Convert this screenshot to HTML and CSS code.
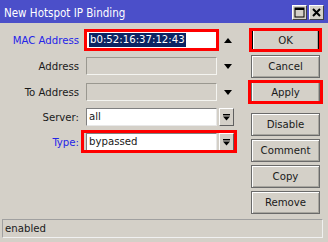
FILE: index.html
```html
<!DOCTYPE html>
<html>
<head>
<meta charset="utf-8">
<link rel="stylesheet" href="styles.css">
</head>
<body>
<div class="window">
  <div class="titlebar">
    <span class="title">New Hotspot IP Binding</span>
    <div class="tbtns">
      <span class="tbtn"><svg width="11" height="11" viewBox="0 0 11 11"><rect x="1" y="1" width="9" height="9" fill="none" stroke="#000" stroke-width="1"/><rect x="1" y="1" width="9" height="2" fill="#000"/></svg></span>
      <span class="tbtn"><svg width="11" height="11" viewBox="0 0 11 11"><path d="M2 2 L9 9 M9 2 L2 9" stroke="#000" stroke-width="2"/></svg></span>
    </div>
  </div>
  <div class="main">
    <div class="form">
      <div class="row r1">
        <label class="lbl blue">MAC Address</label>
        <div class="field white mark mark-mac"><span class="sel">b0:52:16:37:12:43</span></div>
        <div class="side"><span class="tri up"></span></div>
      </div>
      <div class="row r2">
        <label class="lbl">Address</label>
        <div class="field dis"></div>
        <div class="side"><span class="tri down"></span></div>
      </div>
      <div class="row">
        <label class="lbl">To Address</label>
        <div class="field dis"></div>
        <div class="side"><span class="tri down"></span></div>
      </div>
      <div class="row">
        <label class="lbl">Server:</label>
        <div class="combo">
          <div class="field white">all</div>
          <div class="ddbtn"><svg width="9" height="9" viewBox="0 0 9 9"><rect x="1" y="1" width="7" height="1.4" fill="#000"/><path d="M1 3.5 H8 L4.5 7.5 Z" fill="#000"/></svg></div>
        </div>
      </div>
      <div class="row">
        <label class="lbl blue">Type:</label>
        <div class="combo mark mark-type">
          <div class="field white">bypassed</div>
          <div class="ddbtn"><svg width="9" height="9" viewBox="0 0 9 9"><rect x="1" y="1" width="7" height="1.4" fill="#000"/><path d="M1 3.5 H8 L4.5 7.5 Z" fill="#000"/></svg></div>
        </div>
      </div>
    </div>
    <div class="buttons">
      <button class="btn default mark mark-btn">OK</button>
      <button class="btn">Cancel</button>
      <button class="btn mark mark-btn">Apply</button>
      <button class="btn sep">Disable</button>
      <button class="btn">Comment</button>
      <button class="btn">Copy</button>
      <button class="btn">Remove</button>
    </div>
  </div>
  <div class="status">enabled</div>
</div>
</body>
</html>
```
FILE: styles.css
```css
html, body {
  margin: 0;
  padding: 0;
}
body {
  width: 328px;
  height: 242px;
  background: #d4d0c8;
  font-family: "DejaVu Sans Condensed", "DejaVu Sans", sans-serif;
  font-size: 11.3px;
  color: #1a1a1a;
  overflow: hidden;
}
.window {
  width: 328px;
  height: 242px;
  display: flex;
  flex-direction: column;
}
.titlebar {
  height: 23px;
  background: #4b4fc9;
  color: #fff;
  display: flex;
  align-items: center;
  justify-content: space-between;
  padding: 0 4px 0 4px;
  box-sizing: border-box;
}
.title {
  font-size: 11.5px;
  padding-top: 3px;
}
.tbtns {
  display: flex;
  gap: 2px;
  padding-top: 1px;
}
.tbtn {
  width: 15px;
  height: 15px;
  box-sizing: border-box;
  background: #d4d0c8;
  border: 1px solid;
  border-color: #fff #404040 #404040 #fff;
  display: flex;
  align-items: center;
  justify-content: center;
}
.main {
  display: flex;
  height: 196px;
}
.form {
  width: 251px;
  padding-top: 8px;
  display: flex;
  flex-direction: column;
  gap: 7px;
}
.row {
  display: flex;
  align-items: center;
  height: 18px;
}
.row.r1, .row.r2 {
  margin-bottom: 1px;
}
.lbl {
  width: 79px;
  text-align: right;
  margin-right: 7px;
  white-space: nowrap;
}
.blue {
  color: #2424e8;
}
.field {
  width: 131px;
  height: 18px;
  box-sizing: border-box;
  border: 1px solid;
  padding: 0 2px;
  line-height: 16px;
  white-space: nowrap;
}
.field.dis {
  background: #d4d0c8;
  border-color: #9a9890 #f4f4f0 #f4f4f0 #9a9890;
}
.field.white {
  background: #fff;
  border-color: #808080 #e8e8e8 #e8e8e8 #808080;
}
.sel {
  background: #0b2463;
  color: #fff;
  display: inline-block;
  line-height: 14px;
  padding: 0 1px;
}
.side {
  width: 16px;
  margin-left: 3px;
  display: flex;
  justify-content: center;
  align-items: center;
}
.tri {
  width: 0;
  height: 0;
  border-left: 4.5px solid transparent;
  border-right: 4.5px solid transparent;
}
.tri.up {
  border-bottom: 5px solid #000;
}
.tri.down {
  border-top: 5px solid #000;
}
.combo {
  display: flex;
  gap: 2px;
  height: 18px;
}
.ddbtn {
  width: 15px;
  height: 18px;
  box-sizing: border-box;
  background: #d4d0c8;
  border: 1px solid;
  border-color: #fff #606060 #606060 #fff;
  display: flex;
  align-items: center;
  justify-content: center;
}
.mark {
  position: relative;
}
.mark::after {
  content: "";
  position: absolute;
  border: 3px solid #ff0000;
  pointer-events: none;
}
.mark-mac::after {
  left: -3px; right: -3px; top: -3px; bottom: -3px;
}
.mark-type::after {
  left: -5px; right: -3px; top: -3px; bottom: -2px;
}
.mark-btn::after {
  left: -4px; right: -4px; top: -2px; bottom: -1px;
}
.buttons {
  display: flex;
  flex-direction: column;
  gap: 3px;
  padding-top: 6px;
}
.btn {
  width: 69px;
  height: 23px;
  margin: 0;
  padding: 0;
  font: inherit;
  color: #1a1a1a;
  background: #d4d0c8;
  border: 1px solid #6a6a6a;
  box-shadow: inset 1px 1px 0 #ffffff, inset -1px -1px 0 #a8a69f;
  box-sizing: border-box;
}
.btn.default {
  border: 1px solid #000;
  border-left-width: 2px;
  border-right-width: 2px;
}
.btn.sep {
  margin-top: 6px;
}
.status {
  margin: 0 5px 0 2px;
  height: 19px;
  box-sizing: border-box;
  border: 1px solid;
  border-color: #a0a0a0 #f0f0f0 #f0f0f0 #a0a0a0;
  padding: 0 2px;
  line-height: 17px;
}
```
